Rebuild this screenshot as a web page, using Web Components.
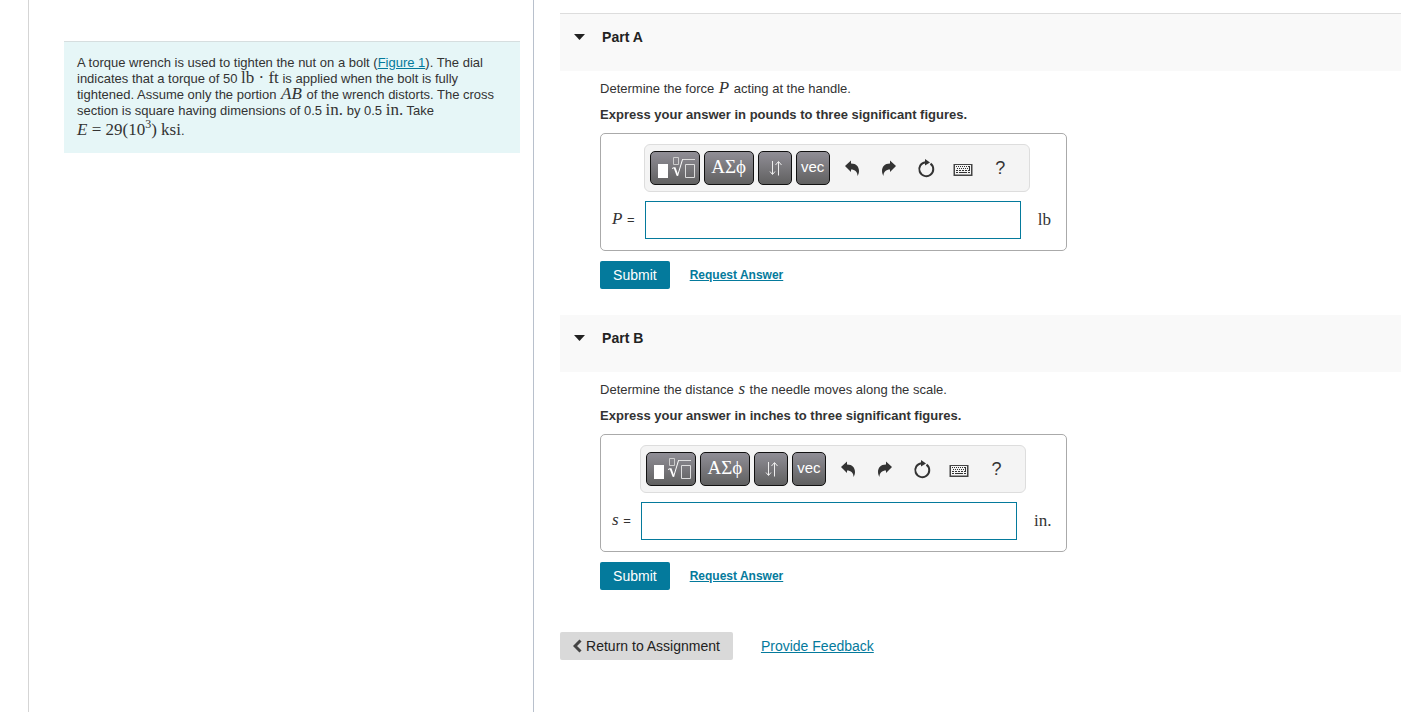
<!DOCTYPE html>
<html lang="en">
<head>
<meta charset="utf-8">
<title>Torque wrench</title>
<style>
  body {
    margin: 0;
    background: #fff;
    color: #333;
    font: 13px/16px "Liberation Sans", Arial, sans-serif;
  }
</style>
</head>
<body>
<exercise-page>
  <problem-panel slot="problem">A torque wrench is used to tighten the nut on a bolt (<text-link href="#figure1">Figure 1</text-link>). The dial indicates that a torque of 50 <math-term>lb · ft</math-term> is applied when the bolt is fully tightened. Assume only the portion <math-term italic>AB</math-term> of the wrench distorts. The cross section is square having dimensions of 0.5 <math-term>in.</math-term> by 0.5 <math-term>in.</math-term> Take <math-term><i>E</i> = 29(10<sup>3</sup>) ksi</math-term>.</problem-panel>

  <part-section heading="Part A" first>
    <span slot="question">Determine the force <math-term italic>P</math-term> acting at the handle.</span>
    <span slot="hint">Express your answer in pounds to three significant figures.</span>
    <answer-box slot="answer" variable="P" unit="lb"></answer-box>
  </part-section>

  <part-section heading="Part B">
    <span slot="question">Determine the distance <math-term italic>s</math-term> the needle moves along the scale.</span>
    <span slot="hint">Express your answer in inches to three significant figures.</span>
    <answer-box slot="answer" variable="s" unit="in."></answer-box>
  </part-section>

  <page-actions></page-actions>
</exercise-page>

<script>
class ExercisePage extends HTMLElement {
  constructor() {
    super();
    this.attachShadow({ mode: 'open' });
    this.shadowRoot.innerHTML = `
      <style>
        :host {
          display: flex;
          min-height: 100vh;
          padding-left: 28px;
          box-sizing: border-box;
        }
        aside {
          flex: 0 0 36.86%;
          box-sizing: border-box;
          padding: 41px 13px 0 35px;
          border-left: 1px solid #d5d5d5;
          border-right: 1px solid #b8c0cc;
        }
        main {
          flex: 1;
          min-width: 0;
          padding: 13px 0 24px 26px;
        }
      </style>
      <aside><slot name="problem"></slot></aside>
      <main><slot></slot></main>
    `;
  }
}
customElements.define('exercise-page', ExercisePage);

class ProblemPanel extends HTMLElement {
  constructor() {
    super();
    this.attachShadow({ mode: 'open' });
    this.shadowRoot.innerHTML = `
      <style>
        :host {
          display: block;
          padding: 13px 13px 14px;
          background: #e6f6f7;
          border-top: 1px solid #d6dedf;
        }
      </style>
      <slot></slot>
    `;
  }
}
customElements.define('problem-panel', ProblemPanel);

class TextLink extends HTMLElement {
  constructor() {
    super();
    this.attachShadow({ mode: 'open' });
    this.shadowRoot.innerHTML = `<style>
        a { color: #047a9c; text-decoration: underline; }
      </style><a href="${this.getAttribute('href') || '#'}"><slot></slot></a>`;
  }
}
customElements.define('text-link', TextLink);

// inline formula set in the serif face
class MathTerm extends HTMLElement {
  constructor() {
    super();
    this.attachShadow({ mode: 'open' });
    this.shadowRoot.innerHTML = `<style>
        :host {
          font-family: "Liberation Serif", "Times New Roman", serif;
          font-size: 17px;
          line-height: 12px;
          white-space: nowrap;
        }
        :host([italic]) { font-style: italic; padding: 0 1px; }
        ::slotted(sup) { font-size: 12px; line-height: 10px; }
      </style><slot></slot>`;
  }
}
customElements.define('math-term', MathTerm);

class PartSection extends HTMLElement {
  constructor() {
    super();
    this.attachShadow({ mode: 'open' });
    this.shadowRoot.innerHTML = `
      <style>
        :host { display: block; margin-bottom: 26px; }
        :host([first]) header { border-top: 1px solid #ddd; }
        header { background: #f9f9f9; height: 57px; }
        h2 { margin: 0; }
        .toggle {
          display: flex;
          align-items: center;
          gap: 17px;
          padding: 14px 14px 0;
          border: 0;
          background: none;
          color: #222;
          font: bold 14px/18px "Liberation Sans", Arial, sans-serif;
        }
        .toggle svg { display: block; }
        .body { padding: 10px 40px 0; }
        p { margin: 0 0 10px; }
        .hint { font-weight: bold; }
        .actions { display: flex; align-items: center; gap: 20px; margin-top: 10px; }
        .submit {
          padding: 0 13px;
          height: 28px;
          border: 0;
          border-radius: 2px;
          background: #047a9c;
          color: #fff;
          font: 14px/28px "Liberation Sans", Arial, sans-serif;
        }
        .request { color: #047a9c; font-size: 12px; font-weight: bold; }
      </style>
      <header>
        <h2><button class="toggle" type="button" aria-expanded="true">
          <svg width="11" height="6" viewBox="0 0 11 6"><path d="M0 0h11L5.500 6z" fill="#222"/></svg>
          <span>${this.getAttribute('heading')}</span>
        </button></h2>
      </header>
      <div class="body">
        <p><slot name="question"></slot></p>
        <p class="hint"><slot name="hint"></slot></p>
        <slot name="answer"></slot>
        <div class="actions">
          <button class="submit" type="button">Submit</button>
          <a class="request" href="#request">Request Answer</a>
        </div>
      </div>
    `;
  }
}
customElements.define('part-section', PartSection);

class AnswerBox extends HTMLElement {
  constructor() {
    super();
    this.attachShadow({ mode: 'open' });
    this.shadowRoot.innerHTML = `
      <style>
        :host {
          display: grid;
          grid-template-columns: auto 386px auto;
          row-gap: 9px;
          align-items: center;
          width: max-content;
          padding: 10px 15px 11px 10px;
          border: 1px solid #aaa;
          border-radius: 5px;
        }
        math-toolbar { grid-column: 2; }
        label { grid-column: 1; padding-right: 9px; }
        input {
          box-sizing: border-box;
          width: 376px;
          height: 38px;
          margin: 0 0 0 1px;
          padding: 0 8px;
          border: 1px solid #047a9c;
          background: #fff;
          font: 16px "Liberation Serif", serif;
          outline: 0;
        }
        .unit { padding-left: 8px; }
      </style>
      <math-toolbar></math-toolbar>
      <label for="answer"><math-term italic>${this.getAttribute('variable')}</math-term> =</label>
      <input id="answer" type="text" autocomplete="off">
      <math-term class="unit">${this.getAttribute('unit')}</math-term>
    `;
  }
}
customElements.define('answer-box', AnswerBox);

class MathToolbar extends HTMLElement {
  constructor() {
    super();
    this.attachShadow({ mode: 'open' });
    this.shadowRoot.innerHTML = `
      <style>
        :host {
          display: flex;
          align-items: center;
          gap: 4px;
          box-sizing: border-box;
          height: 48px;
          padding: 0 5px;
          background: #f4f4f4;
          border: 1px solid #ddd;
          border-radius: 6px;
        }
        button {
          display: flex;
          align-items: center;
          justify-content: center;
          box-sizing: border-box;
          padding: 0;
          height: 34px;
        }
        .dark {
          width: 34px;
          border: 1px solid #111;
          border-radius: 5px;
          background: linear-gradient(#908e96, #606060);
          color: #fff;
          font: 15px/28px "Liberation Sans", Arial, sans-serif;
        }
        .text { padding-bottom: 3px; }
        .wide { width: 50px; }
        .greek { font: 19px/28px "Liberation Serif", serif; }
        .icons { display: flex; }
        .plain {
          width: 37px;
          border: 0;
          background: none;
          color: #333;
          font: 18px/32px "Liberation Sans", Arial, sans-serif;
        }
        svg { display: block; }
      </style>
      <button class="dark wide" type="button" aria-label="Templates">
        <svg width="42" height="28" viewBox="0 0 42 28" fill="none" stroke="#fff">
          <path d="M4 10h10v14H4z" fill="#fff" stroke="none"/>
          <path d="M19.500 3.500h5v7h-5z" stroke="#ccc"/>
          <path d="M28 5.500h13M31.500 10.500h9v13h-9z" stroke="#ddd"/>
          <path d="M18 14.500l2.500-1"/>
          <path d="M20.500 13.500l3 8" stroke-width="2"/>
          <path d="M23.500 22L28.500 5.500"/>
        </svg>
      </button>
      <button class="dark wide text greek" type="button" aria-label="Symbols">ΑΣϕ</button>
      <button class="dark" type="button" aria-label="Subscript and superscript">
        <svg width="14" height="18" viewBox="0 0 14 18" fill="none" stroke="#eee">
          <path d="M4.500 2v13M2 12.500l2.500 3 2.500-3M10.500 16.500V3M7.500 6l3-3.500 3 3.500"/>
        </svg>
      </button>
      <button class="dark text" type="button" aria-label="Vector">vec</button>
      <div class="icons">
        <button class="plain" type="button" aria-label="Undo">
          <svg width="16" height="18" viewBox="0 0 16 18" fill="#333"><path d="M1 7L7 1.500v3C12.500 4.500 15 8 15 12c0 1.800-.5 3.500-1.500 5 .2-4-2.500-6.500-6.500-6.500v2.500z"/></svg>
        </button>
        <button class="plain" type="button" aria-label="Redo">
          <svg width="16" height="18" viewBox="0 0 16 18" fill="#333"><path d="M15 7L9 1.500v3C3.500 4.500 1 8 1 12c0 1.800.5 3.500 1.500 5-.2-4 2.500-6.500 6.500-6.500v2.500z"/></svg>
        </button>
        <button class="plain" type="button" aria-label="Reset">
          <svg width="18" height="20" viewBox="0 0 18 20"><path d="M13.500 5.600A7 7 0 1 1 8.500 4.200" fill="none" stroke="#333" stroke-width="2"/><path d="M8 1l5 3.500-5 3z" fill="#333"/></svg>
        </button>
        <button class="plain" type="button" aria-label="Keyboard">
          <svg width="20" height="18" viewBox="0 0 20 18"><path d="M.5 5h19v12H.5z" fill="#444"/><path d="M2 6h16v9.500H2z" fill="#f4f4f4"/><path d="M3 7.500h14M4 9.500h13" stroke="#333" stroke-dasharray="1 1"/><path d="M3 11.500h11M15 11.500h2" stroke="#333" stroke-dasharray="2 1"/><path d="M16.500 7v4M6 13.500h8M3 13.500h2M15 13.500h2" stroke="#333"/></svg>
        </button>
        <button class="plain" type="button" aria-label="Help">?</button>
      </div>
    `;
  }
}
customElements.define('math-toolbar', MathToolbar);

class PageActions extends HTMLElement {
  constructor() {
    super();
    this.attachShadow({ mode: 'open' });
    this.shadowRoot.innerHTML = `
      <style>
        :host {
          display: flex;
          align-items: center;
          gap: 28px;
          padding-top: 16px;
          font-size: 14px;
        }
        button {
          display: flex;
          align-items: center;
          gap: 4px;
          height: 28px;
          padding: 0 13px;
          border: 0;
          border-radius: 2px;
          background: #d9d9d9;
          color: #222;
          font: 14px/28px "Liberation Sans", Arial, sans-serif;
        }
        a { color: #047a9c; }
      </style>
      <button type="button">
        <svg width="9" height="14" viewBox="0 0 9 14"><path d="M7.500 1.500L2 7l5.500 5.500" fill="none" stroke="#444" stroke-width="3"/></svg>
        Return to Assignment
      </button>
      <a href="#feedback">Provide Feedback</a>
    `;
  }
}
customElements.define('page-actions', PageActions);
</script>
</body>
</html>
